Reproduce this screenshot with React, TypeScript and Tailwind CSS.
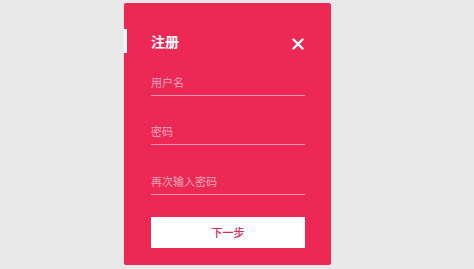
const Field = ({ label, className }: { label: string; className: string }) => (
    <div className={`border-b border-white/50 pb-[5px] ${className}`}>
        <div className="h-4 text-[11px] leading-4 text-white/60">{label}</div>
    </div>
);

export default function App() {
    return (
        <div
            className="h-[269px] overflow-hidden bg-[#e9e9e9] pt-[3px]"
            style={{ fontFamily: '"Noto Sans CJK SC", "Noto Sans", sans-serif' }}
        >
            <div className="relative ml-[124px] w-[207px] h-[262px] rounded-[2px] bg-[#ee2855] pt-[26px] pl-[27px] pr-[26px] flex flex-col">
                <span className="absolute left-0 top-[26px] w-[3px] h-6 bg-white" />

                <div className="h-6 flex items-center justify-between">
                    <h2 className="text-[14px] font-bold leading-5 text-white">注册</h2>
                    <svg className="mt-[5px] mr-[1px] w-3 h-3" viewBox="0 0 12 12" fill="none">
                        <path d="M1.5 1.5l9 9M10.5 1.5l-9 9" stroke="white" strokeWidth="2.4" strokeLinecap="round" />
                    </svg>
                </div>

                <Field label="用户名" className="mt-[21px]" />
                <Field label="密码" className="mt-[27px]" />
                <Field label="再次输入密码" className="mt-[28px]" />

                <button className="mt-[22px] w-full h-[31px] bg-white text-[11px] font-medium text-[#d62a4f] flex items-center justify-center">
                    下一步
                </button>
            </div>
        </div>
    );
}
